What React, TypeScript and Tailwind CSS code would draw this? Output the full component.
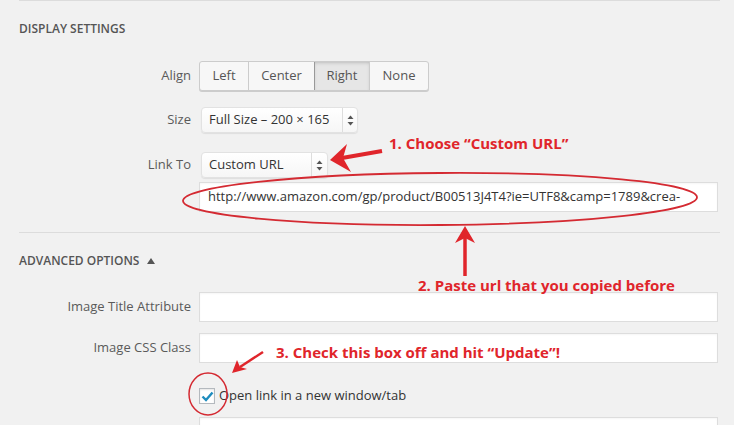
import React from 'react';

const RED = '#e0252b';

function SelectArrows() {
  return (
    <svg width="7" height="11" viewBox="0 0 7 11" className="block">
      <path d="M3.5 0.5 L6.5 4 L0.5 4 Z" fill="#555" />
      <path d="M3.5 10.5 L6.5 7 L0.5 7 Z" fill="#555" />
    </svg>
  );
}

function Select({ value, width, sep }: { value: string; width: string; sep: string }) {
  return (
    <div
      className={`flex h-[26px] ${width} items-stretch rounded-[4px] border border-[#e2e2e2] bg-gradient-to-b from-white to-[#f6f6f6] shadow-[0_1px_1px_rgba(0,0,0,0.08)]`}
    >
      <div className={`flex ${sep} items-center pl-[7px] text-[13px] text-[#333]`}>{value}</div>
      <div className="flex flex-1 items-center justify-center border-l border-[#ddd]">
        <SelectArrows />
      </div>
    </div>
  );
}

function Row({ label, children, className = '' }: { label: string; children: React.ReactNode; className?: string }) {
  return (
    <div className={`flex items-center ${className}`}>
      <div className="w-[172px] shrink-0 text-right text-[13px] text-[#5a5a5a]">{label}</div>
      <div className="ml-[8px] flex">{children}</div>
    </div>
  );
}

function TextInput({ value = '' }: { value?: string }) {
  return (
    <div className="flex h-[30px] w-[519px] items-center border border-[#ddd] bg-white pl-[8px] text-[13px] text-[#333] shadow-[inset_0_1px_2px_rgba(0,0,0,0.04)]">
      {value}
    </div>
  );
}

export default function App() {
  const btn = 'flex h-full items-center justify-center border-l border-[#ccc] text-[13px] text-[#555]';
  return (
    <div className="relative h-[425px] w-[734px] overflow-hidden bg-[#f1f1f1] font-['Open_Sans',sans-serif]">
      <div className="ml-[19px] mr-[14px] border-t border-[#dcdcdc]">
        <h2 className="pt-[20px] text-[12px] font-semibold uppercase leading-[16px] text-[#555]">Display Settings</h2>

        <Row label="Align" className="mt-[24px] h-[30px]">
          <div className="flex h-[30px] overflow-hidden rounded-[3px] border border-[#ccc] bg-[#f7f7f7] shadow-[0_1px_0_#ccc]">
            <div className={`${btn} w-[48px] border-l-0`}>Left</div>
            <div className={`${btn} w-[66px]`}>Center</div>
            <div className={`${btn} w-[56px] border-r border-[#999] border-l-[#999] bg-[#e6e6e6] shadow-[inset_0_2px_5px_-3px_rgba(0,0,0,0.4)]`}>Right</div>
            <div className={`${btn} w-[58px] border-l-0`}>None</div>
          </div>
        </Row>

        <Row label="Size" className="mt-[16px] h-[26px]">
          <div className="ml-[2px]">
            <Select value="Full Size – 200 × 165" width="w-[157px]" sep="w-[140px]" />
          </div>
        </Row>

        <Row label="Link To" className="mt-[19px] h-[26px]">
          <div className="ml-[2px]">
            <Select value="Custom URL" width="w-[127px]" sep="w-[109px]" />
          </div>
        </Row>

        <Row label="" className="mt-[4px] h-[30px]">
          <TextInput value="http://www.amazon.com/gp/product/B00513J4T4?ie=UTF8&camp=1789&crea-" />
        </Row>

        <div className="mt-[20px] border-t border-[#dcdcdc]" />

        <h2 className="flex items-center gap-[8px] pt-[20px] text-[12px] font-semibold uppercase leading-[16px] text-[#555]">
          Advanced Options
          <svg width="8" height="6" viewBox="0 0 8 6">
            <path d="M4 0 L8 6 L0 6 Z" fill="#555" />
          </svg>
        </h2>

        <Row label="Image Title Attribute" className="mt-[23px] h-[30px]">
          <TextInput />
        </Row>

        <Row label="Image CSS Class" className="mt-[11px] h-[30px]">
          <TextInput />
        </Row>

        <Row label="" className="mt-[25px] h-[16px]">
          <div className="flex items-center">
            <div className="flex h-[16px] w-[16px] items-center justify-center border border-[#b4b9be] bg-white shadow-[inset_0_1px_2px_rgba(0,0,0,0.1)]">
              <svg width="13" height="11" viewBox="0 0 13 11">
                <path d="M1.5 5.5 L5 9 L11.5 1.5" fill="none" stroke="#1e8cbe" strokeWidth="2.4" />
              </svg>
            </div>
            <span className="ml-[4px] text-[13px] text-[#333]">Open link in a new window/tab</span>
          </div>
        </Row>

        <Row label="" className="mt-[13px] h-[30px]">
          <TextInput />
        </Row>
      </div>

      {/* annotations */}
      <svg className="pointer-events-none absolute left-0 top-0" width="734" height="425" viewBox="0 0 734 425">
        <ellipse cx="440" cy="199" rx="257" ry="26" fill="none" stroke="#d42a32" strokeWidth="1.8" transform="rotate(-0.4 440 199)" />
        <ellipse cx="208" cy="394" rx="19" ry="21" fill="none" stroke="#d42a32" strokeWidth="1.5" />
        {/* arrow 1 */}
        <line x1="382" y1="151" x2="342" y2="158" stroke={RED} strokeWidth="4" />
        <path d="M330 160 L347 144 L343 158 L351 172 Z" fill={RED} />
        {/* arrow 2 */}
        <line x1="465" y1="276" x2="465" y2="236" stroke={RED} strokeWidth="3.5" />
        <path d="M465 226 L475 243 L465 238 L455 243 Z" fill={RED} />
        {/* arrow 3 */}
        <line x1="263" y1="352" x2="240" y2="367" stroke={RED} strokeWidth="2.5" />
        <path d="M232 373 L237 360 L240 367 L247 369 Z" fill={RED} />
      </svg>

      <div className="absolute left-[389px] top-[133px] text-[15px] font-bold leading-[20px] text-[#e0252b]">1. Choose “Custom URL”</div>
      <div className="absolute left-[418px] top-[275px] text-[15px] font-bold leading-[20px] text-[#e0252b]">2. Paste url that you copied before</div>
      <div className="absolute left-[276px] top-[342px] text-[15px] font-bold leading-[20px] text-[#e0252b]">3. Check this box off and hit “Update”!</div>
    </div>
  );
}
